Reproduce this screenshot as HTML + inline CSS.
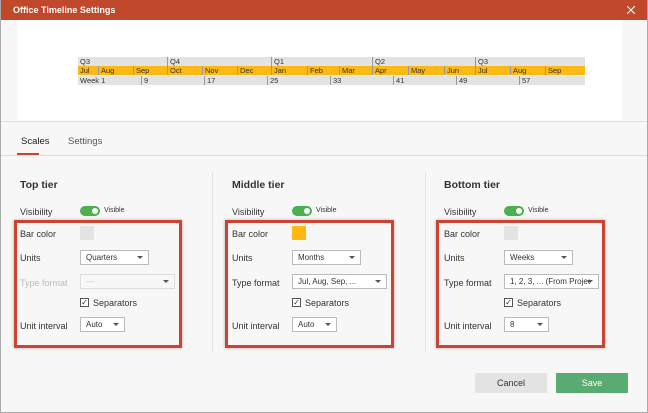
<!DOCTYPE html>
<html><head><style>
*{margin:0;padding:0;box-sizing:border-box}
body{width:648px;height:413px;overflow:hidden;background:#f7f7f7;font-family:"Liberation Sans",sans-serif;position:relative;font-size:9px;color:#333}
.a{position:absolute}
.title{left:0;top:0;width:648px;height:20px;background:#c2482b;color:#fff;font-weight:bold;font-size:9px;line-height:20px;padding-left:13px}
.prev{left:17px;top:20px;width:605px;height:100px;background:#fff}
.row{position:absolute;left:78px;width:507px;height:9px;font-size:7.5px;line-height:9px;white-space:nowrap}
.row span{position:absolute;top:0;padding-left:2px;border-left:1px solid #999}
.lbl{font-size:9px;color:#333}
.dd{background:#fff;border:1px solid #bbb;height:15px;font-size:8px;line-height:13px;padding-left:5px}
.dd:after{content:"";position:absolute;right:5px;top:5px;border:3px solid transparent;border-top:3px solid #555}
.dd i{font-style:normal;display:block;overflow:hidden;white-space:nowrap;width:80px}
.box{border:3px solid #cc4431;box-shadow:0 0 3px rgba(0,0,0,.3)}
.tog{width:20px;height:10px;border-radius:5px;background:#4caf50}
.tog:after{content:"";position:absolute;right:2px;top:2px;width:6px;height:6px;border-radius:3px;background:#fff}
.cb{width:9px;height:9px;border:1px solid #555;background:#fff;font-size:8px;line-height:7px;text-align:center}
.h{font-size:10.5px;font-weight:bold;color:#333}
</style></head><body>
<div class="a title">Office Timeline Settings</div>
<svg class="a" style="right:13px;top:6px" width="8" height="8"><path d="M0 0L8 8M8 0L0 8" stroke="#fff" stroke-width="1.1"/></svg>
<div class="a prev"></div>
<div class="row" style="top:57px;background:#e3e3e3"><span style="left:0;border:0">Q3</span><span style="left:89px">Q4</span><span style="left:193px">Q1</span><span style="left:294px">Q2</span><span style="left:397px">Q3</span><span style="left:505px"></span></div>
<div class="row" style="top:66px;background:#fdb913"><span style="left:0;border:0">Jul</span><span style="left:20px">Aug</span><span style="left:55px">Sep</span><span style="left:89px">Oct</span><span style="left:124px">Nov</span><span style="left:159px">Dec</span><span style="left:193px">Jan</span><span style="left:229px">Feb</span><span style="left:261px">Mar</span><span style="left:294px">Apr</span><span style="left:330px">May</span><span style="left:366px">Jun</span><span style="left:397px">Jul</span><span style="left:432px">Aug</span><span style="left:467px">Sep</span></div>
<div class="row" style="top:76px;background:#e3e3e3"><span style="left:0;border:0">Week 1</span><span style="left:63px">9</span><span style="left:126px">17</span><span style="left:189px">25</span><span style="left:252px">33</span><span style="left:315px">41</span><span style="left:378px">49</span><span style="left:441px">57</span></div>
<div class="a" style="left:0;top:121px;width:648px;height:1px;background:#e0e0e0"></div>
<div class="a" style="left:21px;top:136px;font-size:9.5px;color:#222">Scales</div>
<div class="a" style="left:68px;top:136px;font-size:9.5px;color:#555">Settings</div>
<div class="a" style="left:17px;top:153px;width:22px;height:2px;background:#c2482b"></div>
<div class="a" style="left:0;top:155px;width:648px;height:1px;background:#e0e0e0"></div>
<div class="a" style="left:212px;top:172px;width:1px;height:180px;background:#e3e3e3"></div>
<div class="a" style="left:425px;top:172px;width:1px;height:180px;background:#e3e3e3"></div>

<div class="a h" style="left:20px;top:179px">Top tier</div>
<div class="a lbl" style="left:20px;top:207px">Visibility</div>
<div class="a tog" style="left:80px;top:206px"></div><div class="a" style="left:104px;top:207px;font-size:7px">Visible</div>
<div class="a box" style="left:14px;top:220px;width:168px;height:128px"></div>
<div class="a lbl" style="left:20px;top:229px">Bar color</div>
<div class="a" style="left:80px;top:226px;width:14px;height:14px;background:#e3e3e3"></div>
<div class="a lbl" style="left:20px;top:253px">Units</div>
<div class="a dd" style="left:80px;top:250px;width:69px">Quarters</div>
<div class="a lbl" style="left:20px;top:278px;color:#bbb">Type format</div>
<div class="a dd" style="left:80px;top:274px;width:95px;background:#f7f7f7;border-color:#ddd;color:#ccc">—</div>
<div class="a cb" style="left:80px;top:298px">✓</div><div class="a lbl" style="left:93px;top:298px">Separators</div>
<div class="a lbl" style="left:20px;top:321px">Unit interval</div>
<div class="a dd" style="left:80px;top:317px;width:45px">Auto</div>

<div class="a h" style="left:232px;top:179px">Middle tier</div>
<div class="a lbl" style="left:232px;top:207px">Visibility</div>
<div class="a tog" style="left:292px;top:206px"></div><div class="a" style="left:316px;top:207px;font-size:7px">Visible</div>
<div class="a box" style="left:225px;top:220px;width:169px;height:128px"></div>
<div class="a lbl" style="left:232px;top:229px">Bar color</div>
<div class="a" style="left:292px;top:226px;width:14px;height:14px;background:#fdb913"></div>
<div class="a lbl" style="left:232px;top:253px">Units</div>
<div class="a dd" style="left:292px;top:250px;width:69px">Months</div>
<div class="a lbl" style="left:232px;top:278px">Type format</div>
<div class="a dd" style="left:292px;top:274px;width:95px">Jul, Aug, Sep, ...</div>
<div class="a cb" style="left:292px;top:298px">✓</div><div class="a lbl" style="left:305px;top:298px">Separators</div>
<div class="a lbl" style="left:232px;top:321px">Unit interval</div>
<div class="a dd" style="left:292px;top:317px;width:45px">Auto</div>

<div class="a h" style="left:444px;top:179px">Bottom tier</div>
<div class="a lbl" style="left:444px;top:207px">Visibility</div>
<div class="a tog" style="left:504px;top:206px"></div><div class="a" style="left:528px;top:207px;font-size:7px">Visible</div>
<div class="a box" style="left:436px;top:220px;width:169px;height:128px"></div>
<div class="a lbl" style="left:444px;top:229px">Bar color</div>
<div class="a" style="left:504px;top:226px;width:14px;height:14px;background:#e3e3e3"></div>
<div class="a lbl" style="left:444px;top:253px">Units</div>
<div class="a dd" style="left:504px;top:250px;width:69px">Weeks</div>
<div class="a lbl" style="left:444px;top:278px">Type format</div>
<div class="a dd" style="left:504px;top:274px;width:95px"><i>1, 2, 3, ... (From Project</i></div>
<div class="a cb" style="left:504px;top:298px">✓</div><div class="a lbl" style="left:517px;top:298px">Separators</div>
<div class="a lbl" style="left:444px;top:321px">Unit interval</div>
<div class="a dd" style="left:504px;top:317px;width:45px">8</div>

<div class="a" style="left:475px;top:373px;width:72px;height:20px;background:#e3e3e3;text-align:center;line-height:20px;font-size:9px">Cancel</div>
<div class="a" style="left:556px;top:373px;width:72px;height:20px;background:#5aab72;color:#fff;text-align:center;line-height:20px;font-size:9px">Save</div>
<div class="a" style="left:0;top:0;width:648px;height:413px;border:1px solid #aaa;border-top:0"></div>
</body></html>
